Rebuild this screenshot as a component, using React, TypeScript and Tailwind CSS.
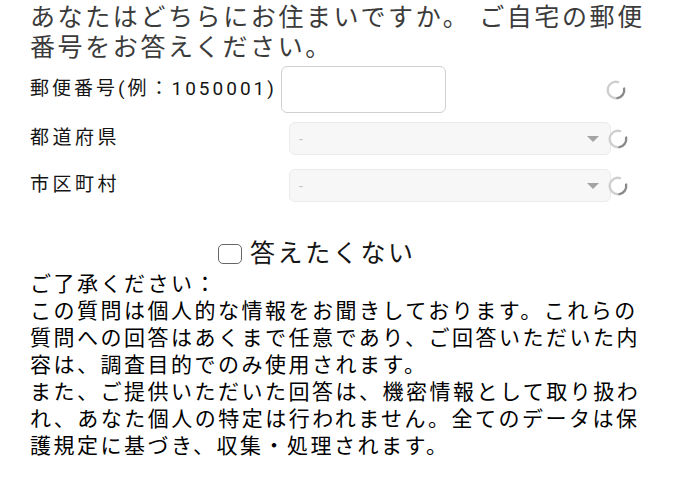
import React from 'react';

const Spinner: React.FC = () => (
  <svg viewBox="0 0 24 24" className="w-[24px] h-[22px] shrink-0" fill="none">
    <path d="M13.56 20.86 A9 9 0 1 1 14.33 3.31" stroke="#cfcfcf" strokeWidth="2.6" strokeLinecap="round" />
    <path d="M20.86 10.44 A9 9 0 0 1 13.56 20.86" stroke="#8a8a8a" strokeWidth="2.6" strokeLinecap="round" />
  </svg>
);

const DisabledSelect: React.FC = () => (
  <div className="w-[322px] h-[33px] flex items-center justify-between pl-[9px] pr-[11px] bg-[#f7f7f7] border border-[#ebebeb] rounded-[6px]">
    <span className="text-[14px] text-[#c4c4c4] leading-none">-</span>
    <svg viewBox="0 0 12 6" className="w-[12px] h-[6px]">
      <path d="M0 0 L12 0 L6 6 Z" fill="#a3a3a3" />
    </svg>
  </div>
);

const App: React.FC = () => {
  return (
    <div className="w-[680px] h-[480px] bg-white pl-[30px] pt-[3px] font-['Roboto','Noto_Sans_CJK_JP',sans-serif] overflow-hidden">
      {/* Question */}
      <h1 className="w-[630px] text-[25px] leading-[30px] tracking-[2.6px] text-[#3b3b3b] font-normal">
        あなたはどちらにお住まいですか。 ご自宅の郵便番号をお答えください。
      </h1>

      {/* Postcode */}
      <div className="w-[598px] mt-[3px] flex items-center">
        <label className="text-[19px] tracking-[3px] text-[#151515] whitespace-nowrap">
          郵便番号(例：1050001)
        </label>
        <input
          type="text"
          className="ml-[4px] w-[165px] h-[47px] bg-white border border-[#d0d0d0] rounded-[6px] outline-none"
        />
        <div className="ml-auto">
          <Spinner />
        </div>
      </div>

      {/* Prefecture */}
      <div className="mt-[9px] flex items-center">
        <span className="w-[259px] text-[19px] tracking-[3.5px] text-[#151515]">都道府県</span>
        <DisabledSelect />
        <div className="-ml-[5px]">
          <Spinner />
        </div>
      </div>

      {/* City */}
      <div className="mt-[14px] flex items-center">
        <span className="w-[259px] text-[19px] tracking-[3.5px] text-[#151515]">市区町村</span>
        <DisabledSelect />
        <div className="-ml-[5px]">
          <Spinner />
        </div>
      </div>

      {/* Opt out */}
      <label className="mt-[37px] ml-[188px] h-[30px] flex items-center gap-[8px]">
        <span className="w-[24px] h-[20px] border-[1.5px] border-[#666666] rounded-[5px] bg-white" />
        <span className="text-[25px] leading-[30px] tracking-[2.6px] text-[#151515]">答えたくない</span>
      </label>

      {/* Notice */}
      <p className="mt-[2px] w-[622px] text-[21px] leading-[27px] tracking-[2.5px] text-black">
        ご了承ください：
        <br />
        この質問は個人的な情報をお聞きしております。これらの質問への回答はあくまで任意であり、ご回答いただいた内容は、調査目的でのみ使用されます。
        <br />
        また、ご提供いただいた回答は、機密情報として取り扱われ、あなた個人の特定は行われません。全てのデータは保護規定に基づき、収集・処理されます。
      </p>
    </div>
  );
};

export default App;
